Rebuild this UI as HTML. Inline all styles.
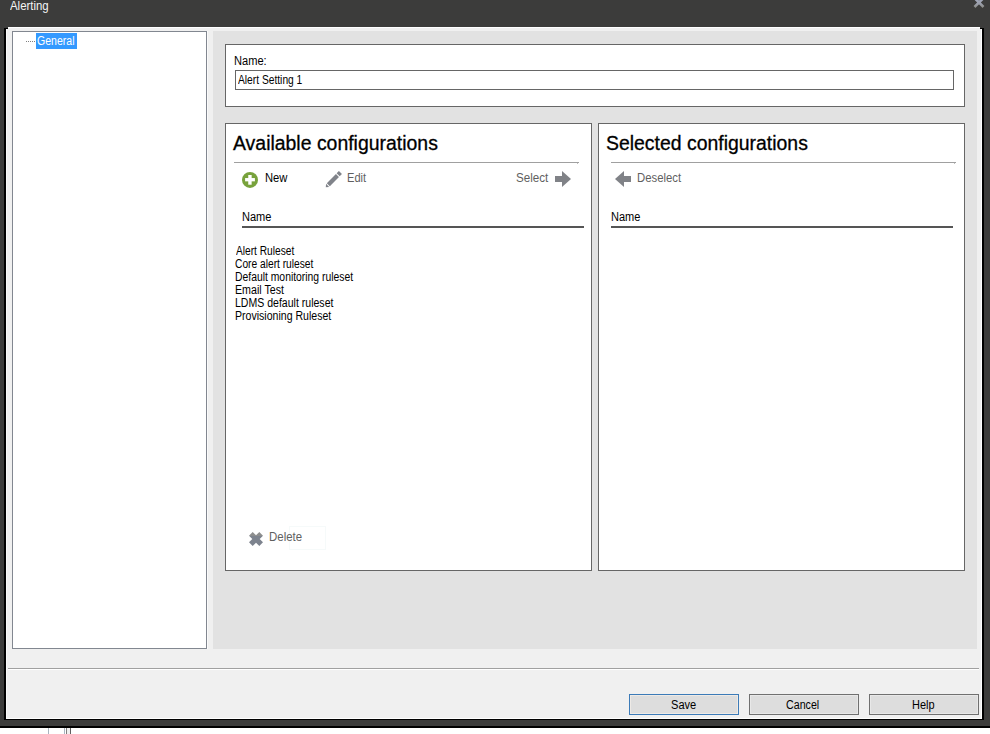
<!DOCTYPE html>
<html><head><meta charset="utf-8"><title>Alerting</title>
<style>
html,body{margin:0;padding:0;}
body{width:990px;height:734px;position:relative;overflow:hidden;background:#fff;font-family:'Liberation Sans',sans-serif;}
.r{position:absolute;box-sizing:border-box;}
.t{position:absolute;white-space:pre;line-height:20px;transform-origin:0 0;font-family:'Liberation Sans',sans-serif;}
svg.r{overflow:visible}
</style></head><body>
<div class="r" style="left:0px;top:0px;width:990px;height:734px;background:#ffffff;"></div>
<div class="r" style="left:0px;top:0px;width:990px;height:728px;background:#3c3c3b;"></div>
<div class="r" style="left:0px;top:726px;width:990px;height:2px;background:#000;"></div>
<div class="r" style="left:4px;top:28px;width:2px;height:692px;background:#000;"></div>
<div class="r" style="left:982px;top:28px;width:2px;height:692px;background:#000;"></div>
<div class="r" style="left:4px;top:719px;width:980px;height:1px;background:#000;"></div>
<div class="r" style="left:6px;top:29px;width:976px;height:690px;background:#f0f0f0;"></div>
<div class="r" style="left:8px;top:28px;width:972px;height:1px;background:#f0f0f0;"></div>
<div class="r" style="left:8px;top:27px;width:972px;height:1px;background:#ffffff;"></div>
<div class="r" style="left:4px;top:28px;width:4px;height:1px;background:#000;"></div>
<div class="r" style="left:980px;top:28px;width:4px;height:1px;background:#000;"></div>
<div class="r" style="left:6px;top:29px;width:1px;height:690px;background:#fafafa;"></div>
<div class="r" style="left:981px;top:29px;width:1px;height:690px;background:#ffffff;"></div>
<div class="r" style="left:6px;top:718px;width:976px;height:1px;background:#ffffff;"></div>
<div class="t" style="left:10.00px;top:-4.16px;font-size:12px;color:#f4f4f4;transform:scaleX(0.9500);">Alerting</div>
<svg class="r" style="left:968px;top:0px" width="20" height="12" viewBox="968 0 20 12"><defs><linearGradient id="cg" x1="0" y1="0" x2="0" y2="8" gradientUnits="userSpaceOnUse"><stop offset="0" stop-color="#a2a8ba"/><stop offset="0.5" stop-color="#9a9eaa"/><stop offset="1" stop-color="#8a8980"/></linearGradient></defs><path d="M974.5 -2 L983.5 7 M983.5 -2 L974.5 7" stroke="url(#cg)" stroke-width="2.6"/></svg>
<div class="r" style="left:12px;top:31px;width:195px;height:618px;background:#fff;box-shadow:inset 0 0 0 1px #828790;"></div>
<div class="r" style="left:207px;top:31px;width:1px;height:618px;background:#fafafa;"></div>
<div class="r" style="left:26px;top:41px;width:1px;height:1px;background:#808080;"></div>
<div class="r" style="left:28px;top:41px;width:1px;height:1px;background:#808080;"></div>
<div class="r" style="left:30px;top:41px;width:1px;height:1px;background:#808080;"></div>
<div class="r" style="left:32px;top:41px;width:1px;height:1px;background:#808080;"></div>
<div class="r" style="left:34px;top:41px;width:1px;height:1px;background:#808080;"></div>
<div class="r" style="left:36px;top:33px;width:41px;height:16px;background:#3399ff;"></div>
<div class="t" style="left:37.12px;top:30.84px;font-size:12px;color:#ffffff;transform:scaleX(0.8780);">General</div>
<div class="r" style="left:213px;top:31px;width:764px;height:618px;background:#e2e2e2;"></div>
<div class="r" style="left:225px;top:44px;width:740px;height:63px;background:#fff;box-shadow:inset 0 0 0 1px #666666;"></div>
<div class="t" style="left:233.58px;top:50.84px;font-size:12px;color:#000;transform:scaleX(0.9242);">Name:</div>
<div class="r" style="left:235px;top:70px;width:719px;height:20px;background:#fff;box-shadow:inset 0 0 0 1px #666666;"></div>
<div class="t" style="left:238.00px;top:69.84px;font-size:12px;color:#000;transform:scaleX(0.8533);">Alert Setting 1</div>
<div class="r" style="left:225px;top:123px;width:367px;height:448px;background:#fff;box-shadow:inset 0 0 0 1px #666666;"></div>
<div class="t" style="left:233.00px;top:133.00px;font-size:20px;color:#000;transform:scaleX(0.9714);-webkit-text-stroke:0.3px #000;">Available configurations</div>
<div class="r" style="left:234px;top:162px;width:345px;height:1px;background:#a0a0a0;"></div>
<div class="r" style="left:577px;top:163px;width:1px;height:1px;background:#c0c0c0;"></div>
<svg class="r" style="left:242px;top:172px" width="16" height="16" viewBox="0 0 16 16"><circle cx="8" cy="7.9" r="8" fill="#78a23c"/><rect x="3.1" y="6.05" width="9.8" height="3.3" fill="#fff"/><rect x="6.25" y="3" width="3.4" height="9.7" fill="#fff"/></svg>
<div class="t" style="left:264.57px;top:167.84px;font-size:12px;color:#000;transform:scaleX(0.9348);">New</div>
<svg class="r" style="left:322px;top:166px" width="24" height="24" viewBox="322 166 24 24"><g transform="translate(326,187) rotate(-45)" fill="#80838a"><path d="M-0.3 0 L2.3 -2.15 L2.3 2.15 Z"/><rect x="3.3" y="-2.15" width="12.9" height="4.3"/><rect x="17.2" y="-2.15" width="3.2" height="4.3"/></g></svg>
<div class="t" style="left:346.57px;top:167.84px;font-size:12px;color:#5f5f5f;transform:scaleX(0.9250);">Edit</div>
<div class="t" style="left:516.03px;top:167.84px;font-size:12px;color:#5f5f5f;transform:scaleX(0.9688);">Select</div>
<svg class="r" style="left:550px;top:166px" width="26" height="26" viewBox="550 166 26 26"><path d="M555 176 H562 V171 L571 179 L562 187 V182 H555 Z" fill="#808287"/></svg>
<div class="t" style="left:241.58px;top:206.84px;font-size:12px;color:#000;transform:scaleX(0.9194);">Name</div>
<div class="r" style="left:242px;top:226px;width:342px;height:2px;background:#555555;"></div>
<div class="t" style="left:236.00px;top:240.84px;font-size:12px;color:#000;transform:scaleX(0.8478);">Alert Ruleset</div>
<div class="t" style="left:235.15px;top:253.84px;font-size:12px;color:#000;transform:scaleX(0.8516);">Core alert ruleset</div>
<div class="t" style="left:235.14px;top:266.84px;font-size:12px;color:#000;transform:scaleX(0.8640);">Default monitoring ruleset</div>
<div class="t" style="left:235.11px;top:279.84px;font-size:12px;color:#000;transform:scaleX(0.8889);">Email Test</div>
<div class="t" style="left:235.12px;top:292.84px;font-size:12px;color:#000;transform:scaleX(0.8784);">LDMS default ruleset</div>
<div class="t" style="left:235.12px;top:305.84px;font-size:12px;color:#000;transform:scaleX(0.8796);">Provisioning Ruleset</div>
<div class="r" style="left:289px;top:526px;width:37px;height:24px;box-shadow:inset 0 0 0 1px #f6fafa;"></div>
<svg class="r" style="left:246px;top:529px" width="20" height="20" viewBox="246 529 20 20"><defs><linearGradient id="xg" x1="0" y1="529" x2="0" y2="549" gradientUnits="userSpaceOnUse"><stop offset="0.36" stop-color="#8d8e8e"/><stop offset="0.36" stop-color="#7d838e"/></linearGradient></defs><path fill="url(#xg)" d="M256.00 542.68 L259.32 546.00 L263.00 542.32 L259.68 539.00 L263.00 535.68 L259.32 532.00 L256.00 535.32 L252.68 532.00 L249.00 535.68 L252.32 539.00 L249.00 542.32 L252.68 546.00 Z"/></svg>
<div class="t" style="left:268.55px;top:526.84px;font-size:12px;color:#5f5f5f;transform:scaleX(0.9545);">Delete</div>
<div class="r" style="left:598px;top:123px;width:367px;height:448px;background:#fff;box-shadow:inset 0 0 0 1px #666666;"></div>
<div class="t" style="left:606.03px;top:133.00px;font-size:20px;color:#000;transform:scaleX(0.9709);-webkit-text-stroke:0.3px #000;">Selected configurations</div>
<div class="r" style="left:611px;top:162px;width:345px;height:1px;background:#a0a0a0;"></div>
<div class="r" style="left:954px;top:163px;width:1px;height:1px;background:#c0c0c0;"></div>
<svg class="r" style="left:610px;top:166px" width="26" height="26" viewBox="610 166 26 26"><path d="M631 176 H624 V171 L615 179 L624 187 V182 H631 Z" fill="#808287"/></svg>
<div class="t" style="left:636.55px;top:167.84px;font-size:12px;color:#5f5f5f;transform:scaleX(0.9457);">Deselect</div>
<div class="t" style="left:611.08px;top:206.84px;font-size:12px;color:#000;transform:scaleX(0.9194);">Name</div>
<div class="r" style="left:611px;top:226px;width:342px;height:2px;background:#555555;"></div>
<div class="r" style="left:8px;top:668px;width:971px;height:1px;background:#a0a0a0;"></div>
<div class="r" style="left:8px;top:669px;width:971px;height:1px;background:#ffffff;"></div>
<div class="r" style="left:629px;top:694px;width:110px;height:21px;background:#dddddd;box-shadow:inset 0 0 0 1px #3c7bb8;"></div>
<div class="r" style="left:630px;top:695px;width:108px;height:19px;box-shadow:inset 0 0 0 1px #eeeae6;"></div>
<div class="t" style="left:670.58px;top:694.84px;font-size:12px;color:#000;transform:scaleX(0.9231);">Save</div>
<div class="r" style="left:749px;top:694px;width:110px;height:21px;background:#dddddd;box-shadow:inset 0 0 0 1px #707070;"></div>
<div class="r" style="left:750px;top:695px;width:108px;height:19px;box-shadow:inset 0 0 0 1px #e8e8e8;"></div>
<div class="t" style="left:786.11px;top:694.84px;font-size:12px;color:#000;transform:scaleX(0.8889);">Cancel</div>
<div class="r" style="left:869px;top:694px;width:110px;height:21px;background:#dddddd;box-shadow:inset 0 0 0 1px #707070;"></div>
<div class="r" style="left:870px;top:695px;width:108px;height:19px;box-shadow:inset 0 0 0 1px #e8e8e8;"></div>
<div class="t" style="left:912.09px;top:694.84px;font-size:12px;color:#000;transform:scaleX(0.9130);">Help</div>
<div class="r" style="left:48px;top:728px;width:1px;height:6px;background:#a8b4c0;"></div>
<div class="r" style="left:64px;top:728px;width:1px;height:6px;background:#a8b4c0;"></div>
<div class="r" style="left:66px;top:728px;width:1px;height:6px;background:#808080;"></div>
<div class="r" style="left:67px;top:728px;width:3px;height:6px;background:#f0f0f0;"></div>
<div class="r" style="left:70px;top:728px;width:1px;height:6px;background:#606060;"></div>
</body></html>
